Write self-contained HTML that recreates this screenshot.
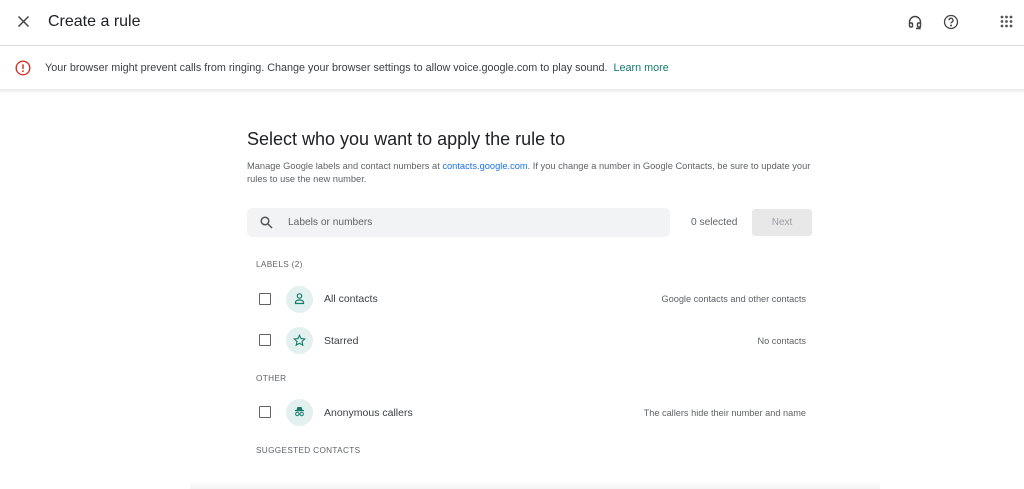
<!DOCTYPE html>
<html><head><style>
*{margin:0;padding:0;box-sizing:border-box}
body{width:1024px;height:489px;overflow:hidden;background:#fff;font-family:"Liberation Sans",sans-serif;color:#202124;position:relative}
.a{position:absolute}
.sm{font-size:8.2px;color:#5f6368;letter-spacing:.35px}
.row{font-size:10.5px;color:#3c4043}
.cb{width:12px;height:12px;border:1.6px solid #5f6368;border-radius:1px}
.av{width:27px;height:27px;border-radius:50%;background:#e2f1ef}
.r{font-size:9.2px;color:#5f6368;text-align:right;width:300px}
</style></head><body>
<svg class="a" style="left:17px;top:15px" width="13" height="13" viewBox="0 0 13 13"><path d="M1.5 1.5L11.5 11.5M11.5 1.5L1.5 11.5" stroke="#444" stroke-width="1.5"/></svg>
<div class="a" style="left:48px;top:13px;font-size:16px;color:#202124">Create a rule</div>
<svg class="a" style="left:907px;top:14px" width="16" height="16" viewBox="0 0 16 16" fill="none" stroke="#444" stroke-width="1.4"><path d="M2.5 10V8a5.5 5.5 0 0 1 11 0v2"/><rect x="2.5" y="9" width="3" height="4" rx="1"/><rect x="10.5" y="9" width="3" height="4" rx="1"/><path d="M13 13v1.5H9"/></svg>
<svg class="a" style="left:943px;top:14px" width="16" height="16" viewBox="0 0 16 16" fill="none" stroke="#444" stroke-width="1.3"><circle cx="8" cy="8" r="6.5"/><path d="M6 6.3a2 2 0 1 1 2.6 1.9c-.5.2-.6.6-.6 1.2"/><circle cx="8" cy="11.5" r=".4" fill="#444"/></svg>
<svg class="a" style="left:1000px;top:15px" width="13" height="13" viewBox="0 0 13 13" fill="#555"><circle cx="2" cy="2" r="1.4"/><circle cx="6.5" cy="2" r="1.4"/><circle cx="11" cy="2" r="1.4"/><circle cx="2" cy="6.5" r="1.4"/><circle cx="6.5" cy="6.5" r="1.4"/><circle cx="11" cy="6.5" r="1.4"/><circle cx="2" cy="11" r="1.4"/><circle cx="6.5" cy="11" r="1.4"/><circle cx="11" cy="11" r="1.4"/></svg>
<div class="a" style="left:0;top:45px;width:1024px;height:1px;background:#dadce0"></div>
<svg class="a" style="left:15px;top:60px" width="16" height="16" viewBox="0 0 16 16"><circle cx="8" cy="8" r="6.8" fill="none" stroke="#d93025" stroke-width="1.4"/><path d="M8 4.3v4.6" stroke="#d93025" stroke-width="1.5"/><circle cx="8" cy="11.2" r=".9" fill="#d93025"/></svg>
<div class="a" style="left:45px;top:62px;font-size:10.8px;color:#3c4043;white-space:nowrap">Your browser might prevent calls from ringing. Change your browser settings to allow voice.google.com to play sound. &nbsp;<span style="color:#137a6b">Learn more</span></div>
<div class="a" style="left:0;top:89px;width:1024px;height:3px;background:linear-gradient(#e8eaed,#f6f6f6)"></div>
<div class="a" style="left:247px;top:129px;font-size:18px;color:#202124">Select who you want to apply the rule to</div>
<div class="a" style="left:247px;top:160px;width:600px;font-size:9.3px;line-height:12.5px;color:#5f6368;white-space:nowrap">Manage Google labels and contact numbers at <span style="color:#1a73e8">contacts.google.com</span>. If you change a number in Google Contacts, be sure to update your<br>rules to use the new number.</div>
<div class="a" style="left:247px;top:208px;width:423px;height:29px;background:#f1f3f4;border-radius:5px"></div>
<svg class="a" style="left:260px;top:216px" width="13" height="13" viewBox="0 0 13 13" fill="none" stroke="#555" stroke-width="1.5"><circle cx="5" cy="5" r="3.8"/><path d="M8 8l4 4"/></svg>
<div class="a" style="left:288px;top:217px;font-size:10.2px;color:#5f6368">Labels or numbers</div>
<div class="a" style="left:691px;top:217px;font-size:10.2px;color:#5f6368">0 selected</div>
<div class="a" style="left:752px;top:209px;width:60px;height:27px;background:#e8e8e8;border-radius:3px;font-size:10px;color:#9aa0a6;text-align:center;line-height:27px">Next</div>
<div class="a sm" style="left:256px;top:260px">LABELS (2)</div>
<div class="a cb" style="left:259px;top:293px"></div><div class="a av" style="left:286px;top:286px"></div>
<svg class="a" style="left:293px;top:292px" width="13" height="13" viewBox="0 0 13 13" fill="none" stroke="#137a6b" stroke-width="1.2"><circle cx="6.5" cy="4" r="2.2"/><path d="M2.5 11.5v-1.5c0-1 2-2 4-2s4 1 4 2v1.5z"/></svg>
<div class="a row" style="left:324px;top:293px">All contacts</div>
<div class="a r" style="left:506px;top:294px">Google contacts and other contacts</div>
<div class="a cb" style="left:259px;top:334px"></div><div class="a av" style="left:286px;top:327px"></div>
<svg class="a" style="left:293px;top:334px" width="13" height="13" viewBox="0 0 13 13" fill="none" stroke="#137a6b" stroke-width="1.1"><path d="M6.5 1.2l1.6 3.4 3.7.4-2.8 2.5.8 3.7-3.3-1.9-3.3 1.9.8-3.7L1.2 5l3.7-.4z"/></svg>
<div class="a row" style="left:324px;top:335px">Starred</div>
<div class="a r" style="left:506px;top:336px">No contacts</div>
<div class="a sm" style="left:256px;top:374px">OTHER</div>
<div class="a cb" style="left:259px;top:406px"></div><div class="a av" style="left:286px;top:399px"></div>
<svg class="a" style="left:293px;top:405px" width="13" height="13" viewBox="0 0 13 13"><path d="M3.5 5l1-3h4l1 3z" fill="#137a6b"/><rect x="2" y="5" width="9" height="1.2" fill="#137a6b"/><circle cx="4.3" cy="9" r="1.7" fill="none" stroke="#137a6b"/><circle cx="8.7" cy="9" r="1.7" fill="none" stroke="#137a6b"/></svg>
<div class="a row" style="left:324px;top:407px">Anonymous callers</div>
<div class="a r" style="left:506px;top:408px">The callers hide their number and name</div>
<div class="a sm" style="left:256px;top:446px">SUGGESTED CONTACTS</div>
<div class="a" style="left:190px;top:481px;width:690px;height:8px;background:linear-gradient(#fff,#f3f3f3)"></div>
</body></html>
